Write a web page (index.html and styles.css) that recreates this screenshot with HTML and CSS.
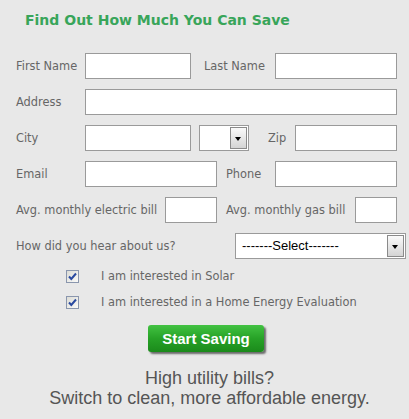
FILE: index.html
```html
<!DOCTYPE html>
<html lang="en">
<head>
    <meta charset="UTF-8">
    <meta name="viewport" content="width=device-width, initial-scale=1.0">
    <title>Find Out How Much You Can Save</title>
    <link rel="stylesheet" href="styles.css">
</head>
<body>
<div class="save-form">
    <h2 class="form-title">Find Out How Much You Can Save</h2>

    <div class="row">
        <label class="lbl w69">First Name</label>
        <input class="field w106" type="text">
        <label class="lbl w71 ml13">Last Name</label>
        <input class="field w122" type="text">
    </div>

    <div class="row">
        <label class="lbl w69">Address</label>
        <input class="field w312" type="text">
    </div>

    <div class="row">
        <label class="lbl w69">City</label>
        <input class="field w106" type="text">
        <div class="dropdown w50 ml8">
            <span class="dropdown-text"></span>
            <span class="dropdown-arrow"></span>
        </div>
        <label class="lbl w27 ml19">Zip</label>
        <input class="field w102" type="text">
    </div>

    <div class="row">
        <label class="lbl w69">Email</label>
        <input class="field w132" type="text">
        <label class="lbl w49 ml9">Phone</label>
        <input class="field w122" type="text">
    </div>

    <div class="row">
        <label class="lbl w149">Avg. monthly electric bill</label>
        <input class="field w52" type="text">
        <label class="lbl w129 ml9">Avg. monthly gas bill</label>
        <input class="field w42" type="text">
    </div>

    <div class="row row-last">
        <label class="lbl w219">How did you hear about us?</label>
        <div class="dropdown w171">
            <span class="dropdown-text">-------Select-------</span>
            <span class="dropdown-arrow"></span>
        </div>
    </div>

    <!-- interests -->
    <div class="check-row">
        <span class="check-box">
            <svg width="9" height="9" viewBox="0 0 9 9"><path d="M1 4.5 L3.3 7 L8 1.5" fill="none" stroke="#2a4aa0" stroke-width="2"/></svg>
        </span>
        <span class="check-label">I am interested in Solar</span>
    </div>
    <div class="check-row">
        <span class="check-box">
            <svg width="9" height="9" viewBox="0 0 9 9"><path d="M1 4.5 L3.3 7 L8 1.5" fill="none" stroke="#2a4aa0" stroke-width="2"/></svg>
        </span>
        <span class="check-label">I am interested in a Home Energy Evaluation</span>
    </div>

    <div class="btn-wrap">
        <a href="#" class="save-btn">Start Saving</a>
    </div>

    <p class="tagline">High utility bills?<br>Switch to clean, more affordable energy.</p>
</div>
</body>
</html>
```

FILE: styles.css
```css
/* General Styles */
body {
    margin: 0;
    padding: 0;
    background: #e8e8e8;
    font-family: 'DejaVu Sans', Verdana, sans-serif;
    color: #666;
}

.save-form {
    padding: 0 0 0 16px;
}

.form-title {
    margin: 0 0 23px 9px;
    padding-top: 10px;
    font-size: 14px;
    line-height: 20px;
    color: #38a55a;
}

/* Rows */
.row {
    display: flex;
    align-items: center;
    height: 26px;
    margin-bottom: 10px;
}

.row-last {
    margin-bottom: 4px;
}

.lbl {
    flex: none;
    font-size: 11.4px;
    color: #666;
}

.field {
    flex: none;
    box-sizing: border-box;
    height: 26px;
    margin: 0;
    padding: 0 3px;
    border: 1px solid #9a9a9a;
    background: #fff;
}

/* Fake select */
.dropdown {
    flex: none;
    box-sizing: border-box;
    display: flex;
    height: 26px;
    border: 1px solid #9a9a9a;
    background: #fff;
}

.dropdown-text {
    flex: 1;
    padding-left: 6px;
    font-family: 'Liberation Sans', Arial, sans-serif;
    font-size: 13px;
    line-height: 24px;
    color: #000;
}

.dropdown-arrow {
    position: relative;
    width: 15px;
    margin: 1px;
    border: 1px solid #8a8a8a;
    background: linear-gradient(to bottom, #fafafa, #d4d4d4);
}

.dropdown-arrow::after {
    content: '';
    position: absolute;
    left: 4px;
    top: 9px;
    border-left: 3.5px solid transparent;
    border-right: 3.5px solid transparent;
    border-top: 4px solid #000;
}

/* Widths */
.w27 { width: 27px; }
.w42 { width: 42px; }
.w49 { width: 49px; }
.w50 { width: 50px; }
.w52 { width: 52px; }
.w69 { width: 69px; }
.w71 { width: 71px; }
.w102 { width: 102px; }
.w106 { width: 106px; }
.w122 { width: 122px; }
.w129 { width: 129px; }
.w132 { width: 132px; }
.w149 { width: 149px; }
.w171 { width: 171px; }
.w219 { width: 219px; }
.w312 { width: 312px; }
.ml8 { margin-left: 8px; }
.ml9 { margin-left: 9px; }
.ml13 { margin-left: 13px; }
.ml19 { margin-left: 19px; }

/* Checkboxes */
.check-row {
    display: flex;
    align-items: center;
    height: 26px;
    padding-left: 50px;
}

.check-box {
    box-sizing: border-box;
    display: flex;
    align-items: center;
    justify-content: center;
    width: 13px;
    height: 13px;
    border: 1px solid #8a96ad;
    background: linear-gradient(to bottom right, #dcdcd6, #fafaf8);
}

.check-label {
    margin-left: 22px;
    font-size: 11.4px;
    color: #666;
}

/* Button */
.btn-wrap {
    margin-top: 10px;
    padding-left: 132px;
}

.save-btn {
    display: inline-block;
    width: 116px;
    height: 27px;
    border-radius: 3px;
    background: linear-gradient(to bottom, #42c242, #27a227 50%, #1b8a1b);
    box-shadow: 2px 2px 2px rgba(0, 0, 0, 0.55);
    color: #fff;
    font-family: 'Liberation Sans', Arial, sans-serif;
    font-weight: bold;
    font-size: 15px;
    line-height: 27px;
    text-align: center;
    text-decoration: none;
}

.tagline {
    margin: 16px 0 0 -6px;
    font-family: 'Liberation Sans', Arial, sans-serif;
    font-size: 18px;
    line-height: 20px;
    color: #555;
    text-align: center;
}
```
